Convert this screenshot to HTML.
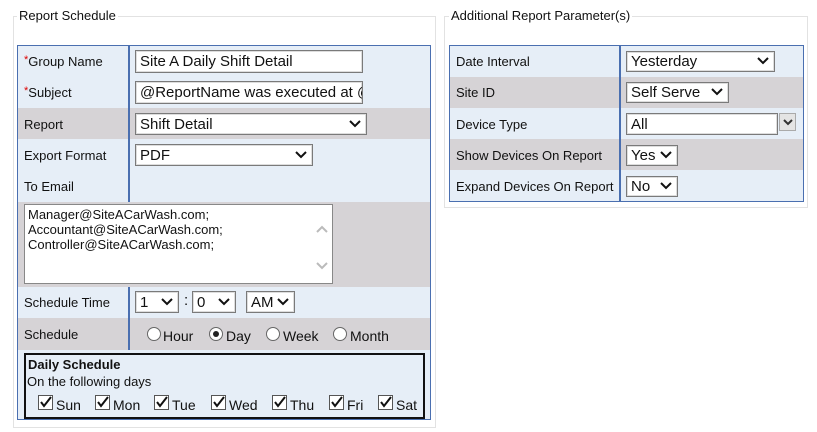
<!DOCTYPE html><html><head><style>
body{margin:0;width:817px;height:432px;background:#fff;font-family:"Liberation Sans",Arial,sans-serif;position:relative;overflow:hidden;color:#111}
.a{position:absolute}
.fs{position:absolute;border:1px solid #e2e2e2}
.lg{position:absolute;background:#fff;font-size:13px;padding:0 2px;color:#111}
.row{position:absolute;left:0;right:0}
.b{background:#e6eef7}.g{background:#d6d3d6}
.lb{position:absolute;font-size:13px}
.in{position:absolute;background:#fff;border:1px solid #7a7a7a;box-shadow:inset 0 0 0 1px #ddd;font-size:15px;line-height:21px;padding-left:4px;box-sizing:border-box;overflow:hidden;white-space:nowrap}
.ch{position:absolute;right:5px;top:5px}
.req{color:#d00;font-size:11px;vertical-align:top}
.rd{position:absolute;width:12px;height:12px;border:1px solid #666;border-radius:50%;background:#fff}
.cb{position:absolute;width:13px;height:13px;border:1px solid #555;background:#fff}
.dl{position:absolute;font-size:14px}
</style></head><body>
<div class="fs" style="left:13px;top:16px;width:421px;height:410px"></div>
<div class="lg" style="left:17px;top:8px">Report Schedule</div>
<div class="a" style="left:17px;top:45px;width:412px;height:373px;border:1px solid #4a6fb0;overflow:hidden">
<div class="row b" style="top:0;height:62px"></div>
<div class="row g" style="top:62px;height:31px"></div>
<div class="row b" style="top:93px;height:63px"></div>
<div class="row g" style="top:156px;height:85px"></div>
<div class="row b" style="top:241px;height:31px"></div>
<div class="row g" style="top:272px;height:32px"></div>
<div class="row b" style="top:304px;height:70px"></div>
<div class="a" style="left:110px;top:0;width:2px;height:156px;background:#4a6fb0"></div>
<div class="a" style="left:110px;top:241px;width:2px;height:63px;background:#4a6fb0"></div>
</div>
<div class="lb" style="left:24px;top:54px"><span class="req">*</span>Group Name</div>
<div class="lb" style="left:24px;top:85px"><span class="req">*</span>Subject</div>
<div class="lb" style="left:24px;top:117px">Report</div>
<div class="lb" style="left:24px;top:148px">Export Format</div>
<div class="lb" style="left:24px;top:179px">To Email</div>
<div class="lb" style="left:24px;top:295px">Schedule Time</div>
<div class="lb" style="left:24px;top:327px">Schedule</div>
<div class="in" style="left:135px;top:50px;width:228px;height:23px">Site A Daily Shift Detail</div>
<div class="in" style="left:135px;top:81px;width:228px;height:23px">@ReportName was executed at @</div>
<div class="in" style="left:135px;top:113px;width:232px;height:22px">Shift Detail<svg class="ch" width="12" height="10"><path d="M1 2l5 5 5-5" stroke="#111" stroke-width="2" fill="none"/></svg></div>
<div class="in" style="left:135px;top:144px;width:178px;height:22px">PDF<svg class="ch" width="12" height="10"><path d="M1 2l5 5 5-5" stroke="#111" stroke-width="2" fill="none"/></svg></div>
<div class="a" style="left:24px;top:204px;width:309px;height:80px;background:#fff;border:1px solid #888;box-sizing:border-box;font-size:13px;line-height:15px;padding:2px 3px">Manager@SiteACarWash.com;<br>Accountant@SiteACarWash.com;<br>Controller@SiteACarWash.com;
<svg class="a" style="left:290px;top:18px" width="14" height="50"><path d="M2 9l5-5 5 5M2 40l5 5 5-5" stroke="#bbb" stroke-width="2" fill="none"/></svg></div>
<div class="in" style="left:135px;top:291px;width:44px;height:22px">1<svg class="ch" width="12" height="10"><path d="M1 2l5 5 5-5" stroke="#111" stroke-width="2" fill="none"/></svg></div>
<div class="a" style="left:184px;top:292px;font-size:15px">:</div>
<div class="in" style="left:192px;top:291px;width:44px;height:22px">0<svg class="ch" width="12" height="10"><path d="M1 2l5 5 5-5" stroke="#111" stroke-width="2" fill="none"/></svg></div>
<div class="in" style="left:246px;top:291px;width:49px;height:22px">AM<svg class="ch" width="12" height="10"><path d="M1 2l5 5 5-5" stroke="#111" stroke-width="2" fill="none"/></svg></div>
<div class="rd" style="left:147px;top:327px"></div><div class="dl" style="left:163px;top:328px">Hour</div>
<div class="rd" style="left:209px;top:327px"><div class="a" style="left:3px;top:3px;width:6px;height:6px;border-radius:50%;background:#222"></div></div><div class="dl" style="left:226px;top:328px">Day</div>
<div class="rd" style="left:266px;top:327px"></div><div class="dl" style="left:283px;top:328px">Week</div>
<div class="rd" style="left:333px;top:327px"></div><div class="dl" style="left:350px;top:328px">Month</div>
<div class="a" style="left:24px;top:353px;width:397px;height:62px;border:2px solid #111"></div>
<div class="a" style="left:28px;top:357px;font-size:13px;font-weight:bold">Daily Schedule</div>
<div class="a" style="left:27px;top:374px;font-size:13px">On the following days</div>
<div class="cb" style="left:38px;top:395px"></div><div class="dl" style="left:56px;top:397px">Sun</div>
<div class="cb" style="left:95px;top:395px"></div><div class="dl" style="left:113px;top:397px">Mon</div>
<div class="cb" style="left:154px;top:395px"></div><div class="dl" style="left:172px;top:397px">Tue</div>
<div class="cb" style="left:211px;top:395px"></div><div class="dl" style="left:229px;top:397px">Wed</div>
<div class="cb" style="left:272px;top:395px"></div><div class="dl" style="left:290px;top:397px">Thu</div>
<div class="cb" style="left:329px;top:395px"></div><div class="dl" style="left:347px;top:397px">Fri</div>
<div class="cb" style="left:378px;top:395px"></div><div class="dl" style="left:396px;top:397px">Sat</div>
<svg class="a" style="left:0;top:0" width="817" height="432" pointer-events="none">
<g stroke="#111" stroke-width="2" fill="none">
<path d="M41 402l3 4 7-9"/><path d="M98 402l3 4 7-9"/><path d="M157 402l3 4 7-9"/><path d="M214 402l3 4 7-9"/><path d="M275 402l3 4 7-9"/><path d="M332 402l3 4 7-9"/><path d="M381 402l3 4 7-9"/>
</g></svg>

<div class="fs" style="left:444px;top:16px;width:362px;height:190px"></div>
<div class="lg" style="left:449px;top:8px">Additional Report Parameter(s)</div>
<div class="a" style="left:449px;top:45px;width:353px;height:155px;border:1px solid #4a6fb0;overflow:hidden">
<div class="row b" style="top:0;height:31px"></div>
<div class="row g" style="top:31px;height:31px"></div>
<div class="row b" style="top:62px;height:31px"></div>
<div class="row g" style="top:93px;height:31px"></div>
<div class="row b" style="top:124px;height:31px"></div>
<div class="a" style="left:169px;top:0;width:2px;height:155px;background:#4a6fb0"></div>
</div>
<div class="lb" style="left:456px;top:54px">Date Interval</div>
<div class="lb" style="left:456px;top:85px">Site ID</div>
<div class="lb" style="left:456px;top:117px">Device Type</div>
<div class="lb" style="left:456px;top:148px">Show Devices On Report</div>
<div class="lb" style="left:456px;top:179px">Expand Devices On Report</div>
<div class="in" style="left:626px;top:51px;width:149px;height:21px;line-height:20px">Yesterday<svg class="ch" width="12" height="10" style="top:4px"><path d="M1 2l5 5 5-5" stroke="#111" stroke-width="2" fill="none"/></svg></div>
<div class="in" style="left:626px;top:82px;width:103px;height:21px;line-height:20px">Self Serve<svg class="ch" width="12" height="10" style="top:4px"><path d="M1 2l5 5 5-5" stroke="#111" stroke-width="2" fill="none"/></svg></div>
<div class="in" style="left:626px;top:113px;width:152px;height:22px">All</div>
<div class="a" style="left:779px;top:113px;width:17px;height:18px;background:#e4e4e4;border:1px solid #aaa;box-sizing:border-box"><svg class="a" style="left:3px;top:4px" width="10" height="8"><path d="M1 2l4 4 4-4" stroke="#333" stroke-width="2" fill="none"/></svg></div>
<div class="in" style="left:626px;top:145px;width:52px;height:21px;line-height:20px">Yes<svg class="ch" width="12" height="10" style="top:4px"><path d="M1 2l5 5 5-5" stroke="#111" stroke-width="2" fill="none"/></svg></div>
<div class="in" style="left:626px;top:176px;width:52px;height:21px;line-height:20px">No<svg class="ch" width="12" height="10" style="top:4px"><path d="M1 2l5 5 5-5" stroke="#111" stroke-width="2" fill="none"/></svg></div>
</body></html>
